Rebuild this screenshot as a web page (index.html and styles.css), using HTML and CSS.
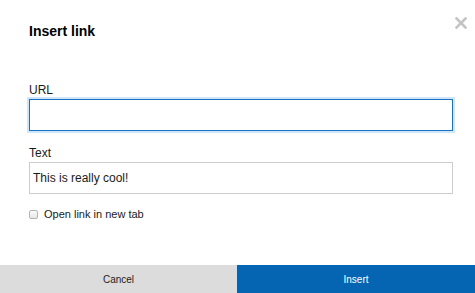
FILE: index.html
```html
<!DOCTYPE html>
<html lang="en">
  <head>
    <meta charset="UTF-8" />
    <meta name="viewport" content="width=device-width, initial-scale=1.0" />
    <title>Insert link</title>
    <link rel="stylesheet" href="styles.css">
  </head>
  <body>
    <div class="dialog">
      <div class="content">
        <div class="header">
          <h1>Insert link</h1>
          <button class="close" aria-label="Close">
            <svg width="12" height="12" viewBox="0 0 12 12">
              <path d="M1.5 1.5 L10.5 10.5 M10.5 1.5 L1.5 10.5" stroke="#c4c4c4" stroke-width="2.6" stroke-linecap="square" />
            </svg>
          </button>
        </div>
        <label class="field" for="url">
          <span>URL</span>
          <input type="text" id="url" class="focused" />
        </label>
        <label class="field" for="text">
          <span>Text</span>
          <input type="text" id="text" value="This is really cool!" />
        </label>
        <label class="check" for="newtab">
          <input type="checkbox" id="newtab" />
          <span>Open link in new tab</span>
        </label>
      </div>
      <div class="footer">
        <button class="btn cancel">Cancel</button>
        <button class="btn insert">Insert</button>
      </div>
    </div>
  </body>
</html>
```

FILE: styles.css
```css
* {
  padding: 0;
  margin: 0;
  box-sizing: border-box;
}
body {
  font-family: "Liberation Sans", Arial, Helvetica, sans-serif;
  color: #1a1a1a;
  background: #fff;
}
.dialog {
  width: 475px;
  height: 293px;
  display: flex;
  flex-direction: column;
}
.content {
  flex: 1;
  padding: 23px 22px 0 29px;
}
.header {
  display: flex;
  justify-content: space-between;
  align-items: flex-start;
  margin-bottom: 43px;
}
h1 {
  font-size: 14px;
  line-height: 17px;
  font-weight: bold;
  color: #000;
}
.close {
  border: none;
  background: none;
  margin: -6px -14px 0 0;
  width: 12px;
  height: 12px;
  cursor: pointer;
}
.close svg {
  display: block;
}
.field {
  display: flex;
  flex-direction: column;
  margin-bottom: 15px;
}
.field span {
  font-size: 12px;
  line-height: 14px;
  margin-bottom: 2px;
}
.field input {
  height: 32px;
  width: 100%;
  border: 1px solid #cccccc;
  padding: 0 3px;
  font-family: inherit;
  font-size: 12px;
  color: #1a1a1a;
  outline: none;
}
.field input.focused {
  border-color: #1a6fc6;
  box-shadow: 0 0 0 2px #cfe5f8;
}
.field:nth-of-type(2) {
  margin-bottom: 14px;
}
.check {
  display: flex;
  align-items: center;
  height: 13px;
  font-size: 11px;
  line-height: 13px;
}
.check input {
  appearance: none;
  width: 9px;
  height: 9px;
  border: 1px solid #b4b4b4;
  border-radius: 2px;
  background: linear-gradient(#fafafa, #e8e8e8);
  margin-right: 6px;
}
.footer {
  display: grid;
  grid-template-columns: 237px 1fr;
  height: 28px;
}
.btn {
  border: none;
  font-family: inherit;
  font-size: 10px;
  cursor: pointer;
}
.cancel {
  background-color: #dcdcdc;
  color: #222;
}
.insert {
  background-color: #0565b2;
  color: #fff;
}
```
